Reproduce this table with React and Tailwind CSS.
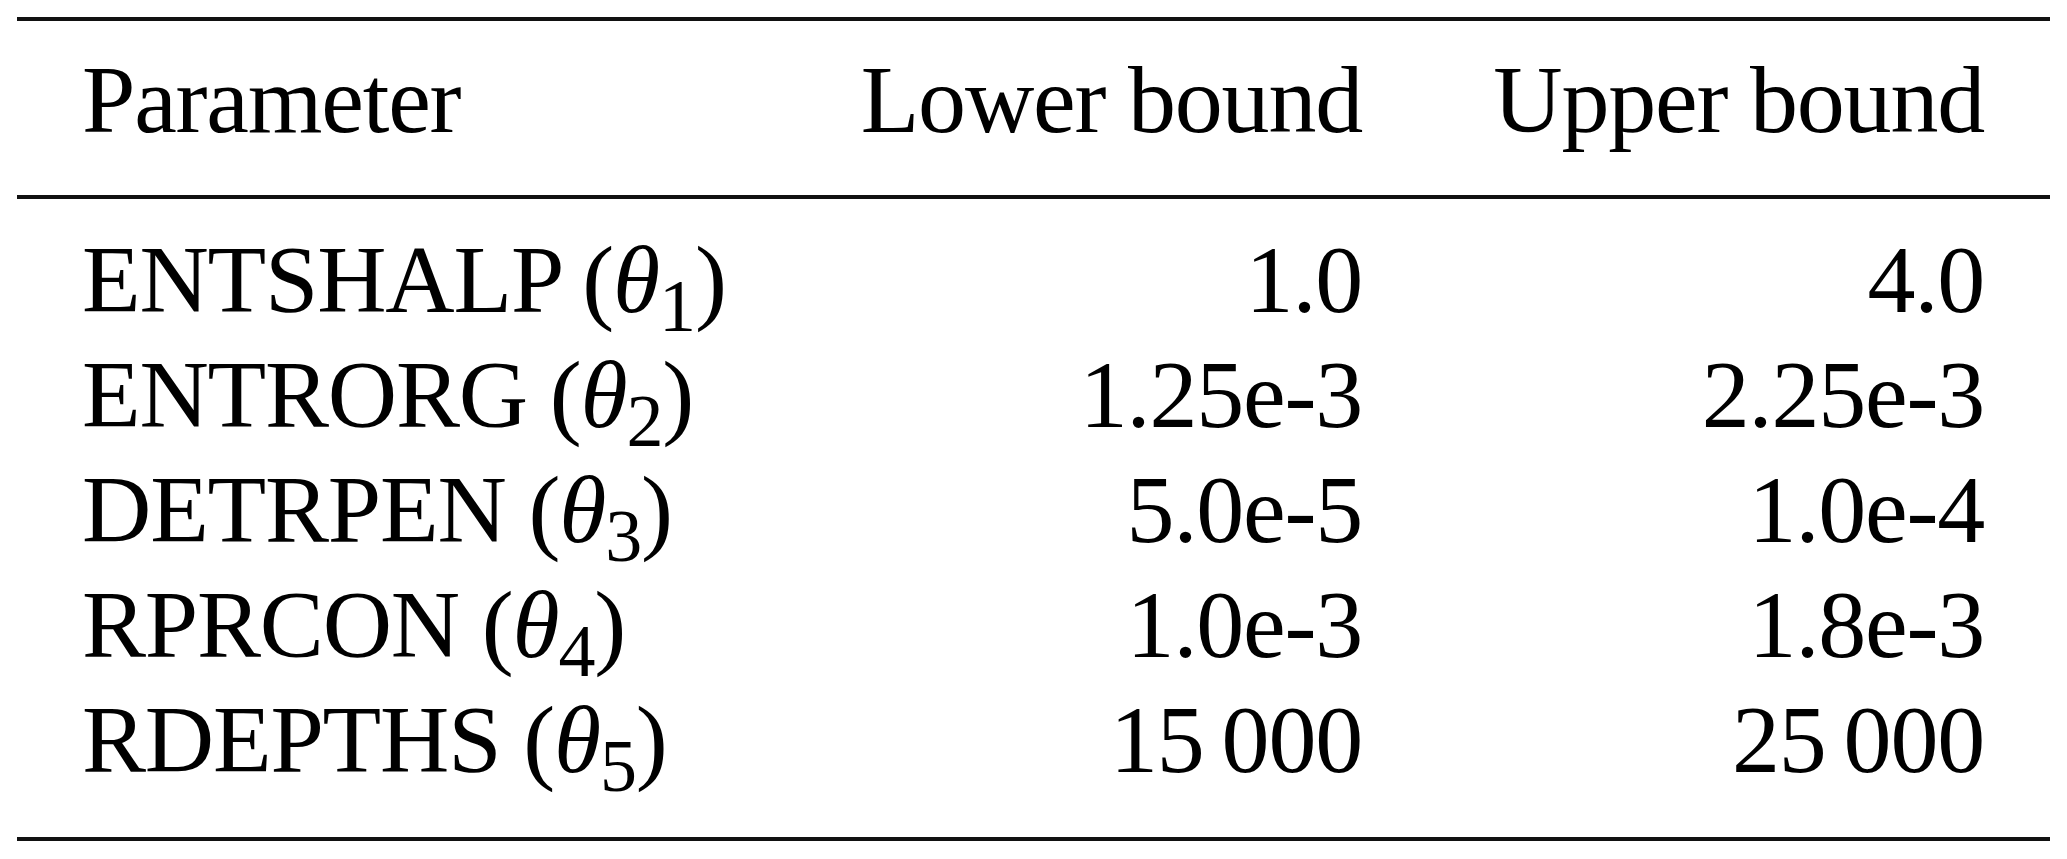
const rows = [
    { name: "ENTSHALP", idx: "1", lower: "1.0", upper: "4.0" },
    { name: "ENTRORG", idx: "2", lower: "1.25e-3", upper: "2.25e-3" },
    { name: "DETRPEN", idx: "3", lower: "5.0e-5", upper: "1.0e-4" },
    { name: "RPRCON", idx: "4", lower: "1.0e-3", upper: "1.8e-3" },
    { name: "RDEPTHS", idx: "5", lower: "15\u2009000", upper: "25\u2009000" },
]

const Rule = () => <div className="h-[4px] bg-[#111]" />

const Row = ({ children }) => (
    <div className="grid grid-cols-[760px_520px_622px] px-[65px] leading-[115px]">
        {children}
    </div>
)

const App = () => {
    return (
        <div className="w-[2067px] h-[859px] bg-white text-black font-['Liberation_Serif','Times_New_Roman',serif] text-[96px] tracking-[-1.2px] px-[17px] pt-[17px] overflow-hidden">
            <Rule />
            <div className="pt-[21px] pb-[38px]">
                <Row>
                    <div>Parameter</div>
                    <div className="text-right">Lower bound</div>
                    <div className="text-right">Upper bound</div>
                </Row>
            </div>
            <Rule />
            <div className="pt-[23px] pb-[40px]">
                {rows.map((row) => (
                    <Row key={row.name}>
                        <div className="whitespace-nowrap">
                            {row.name} (<i>θ</i>
                            <sub className="text-[74px] bottom-[-19px]">{row.idx}</sub>)
                        </div>
                        <div className="text-right">{row.lower}</div>
                        <div className="text-right">{row.upper}</div>
                    </Row>
                ))}
            </div>
            <Rule />
        </div>
    )
}

export default App
